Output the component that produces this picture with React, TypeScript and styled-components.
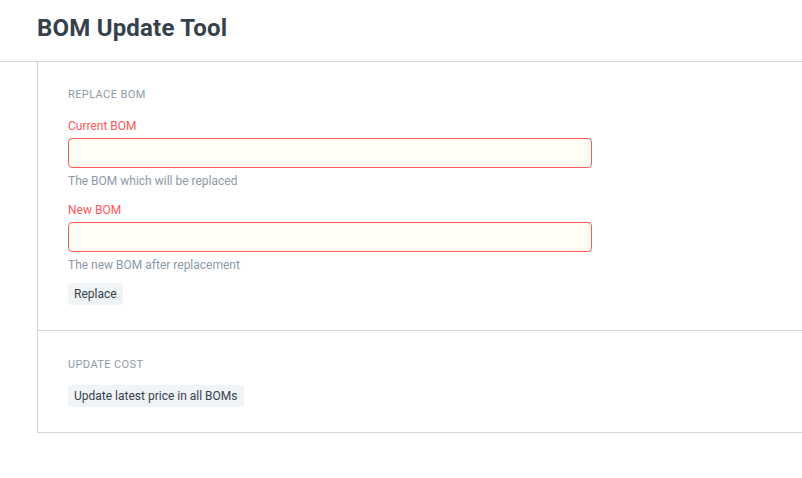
import React from "react";
import styled, { createGlobalStyle } from "styled-components";

const Global = createGlobalStyle`
  html, body { margin: 0; padding: 0; background: #fff; overflow: hidden; }
  body { font-family: Roboto, "Noto Sans", "Liberation Sans", sans-serif; color: #36414c; }
  * { box-sizing: border-box; }
`;

const PageHead = styled.header`
  height: 62px;
  border-bottom: 1px solid #d1d8dd;
  padding-left: 37px;
  display: flex;
  align-items: center;
`;

const Title = styled.h1`
  margin: 0 0 5px 0;
  font-size: 24px;
  letter-spacing: 0.2px;
  font-weight: 700;
  color: #36414c;
  line-height: 30px;
`;

const Layout = styled.main`
  margin-left: 37px;
  border-left: 1px solid #d1d8dd;
  border-bottom: 1px solid #d1d8dd;
`;

const Section = styled.section<{ $top: number; $bottom: number; $divider?: boolean }>`
  padding: ${(p) => p.$top}px 30px ${(p) => p.$bottom}px 30px;
  border-bottom: ${(p) => (p.$divider ? "1px solid #d1d8dd" : "none")};
  display: flex;
  flex-direction: column;
  align-items: flex-start;
`;

const SectionHead = styled.div<{ $gap: number }>`
  font-size: 11px;
  line-height: 16px;
  letter-spacing: 0.4px;
  text-transform: uppercase;
  color: #8d99a6;
  margin-bottom: ${(p) => p.$gap}px;
`;

const Field = styled.div`
  display: flex;
  flex-direction: column;
  width: 524px;
  margin-bottom: 11px;
`;

const Label = styled.label`
  font-size: 12px;
  line-height: 18px;
  color: #ff5858;
  margin-bottom: 3px;
`;

const Input = styled.input`
  height: 30px;
  width: 100%;
  border: 1px solid #ff5858;
  border-radius: 4px;
  background: #fffdf4;
  outline: none;
  font: inherit;
  font-size: 12px;
  padding: 0 8px;
`;

const Help = styled.div`
  font-size: 12px;
  line-height: 18px;
  color: #8d99a6;
  margin-top: 4px;
`;

const Button = styled.button<{ $top?: number }>`
  height: 22px;
  padding: 0 6px;
  margin-top: ${(p) => p.$top ?? 0}px;
  border: none;
  border-radius: 3px;
  background: #f0f4f7;
  color: #36414c;
  font-family: inherit;
  font-size: 12px;
  line-height: 22px;
  cursor: pointer;
`;

export default function App() {
  return (
    <>
      <Global />
      <PageHead>
        <Title>BOM Update Tool</Title>
      </PageHead>
      <Layout>
        <Section $top={25} $bottom={25} $divider>
          <SectionHead $gap={14}>Replace BOM</SectionHead>
          <Field>
            <Label>Current BOM</Label>
            <Input />
            <Help>The BOM which will be replaced</Help>
          </Field>
          <Field>
            <Label>New BOM</Label>
            <Input />
            <Help>The new BOM after replacement</Help>
          </Field>
          <Button $top={-2}>Replace</Button>
        </Section>
        <Section $top={26} $bottom={25}>
          <SectionHead $gap={12}>Update Cost</SectionHead>
          <Button>Update latest price in all BOMs</Button>
        </Section>
      </Layout>
    </>
  );
}
